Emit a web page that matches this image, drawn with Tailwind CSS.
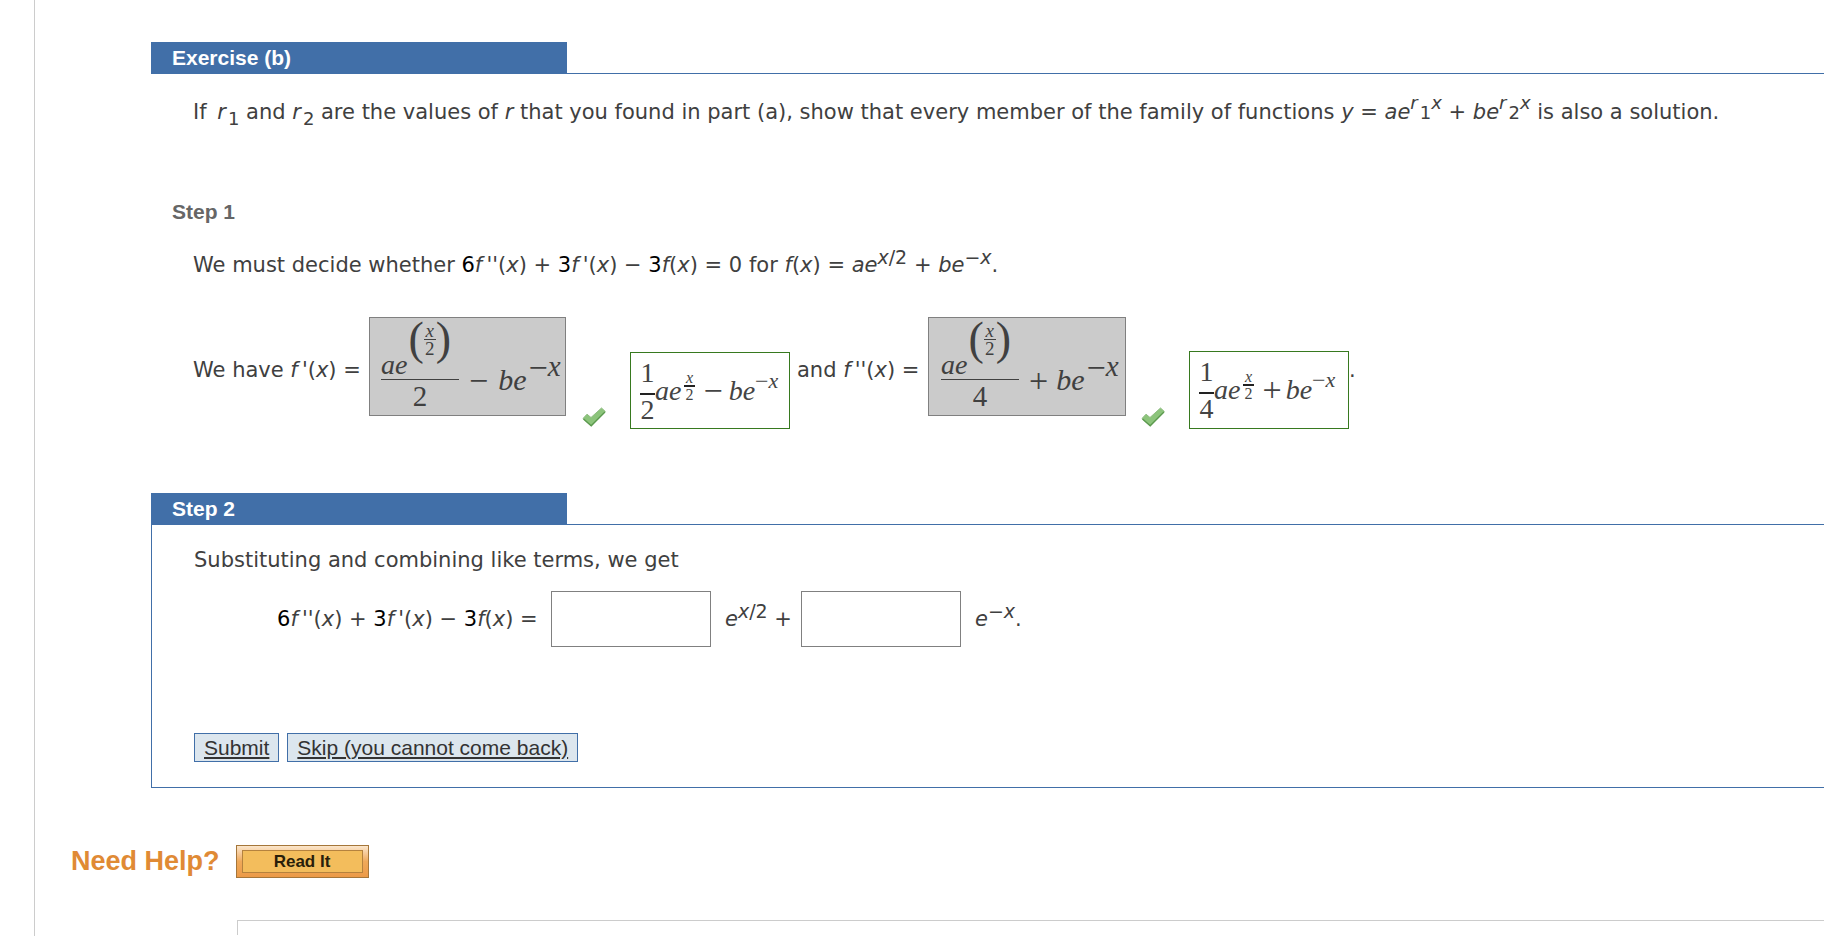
<!DOCTYPE html>
<html lang="en">
  <head>
    <meta charset="utf-8" />
    <title>Exercise (b)</title>
    <script src="https://cdn.jsdelivr.net/npm/@tailwindcss/browser@4"></script>
  </head>
  <body class="bg-white font-['DejaVu_Sans',sans-serif] text-[21px] leading-[30px] text-[#404040]">
    <!-- check mark shared by the graded answers -->
    <svg class="hidden">
      <symbol id="check" viewBox="0 0 24 20">
        <path
          d="M1 11.5 L5 7.2 L9 10.5 L19.5 1 L23.3 4.5 L9.2 19 Z"
          fill="#8cc47b"
          stroke="#8fbd82"
          stroke-width="1"
          stroke-linejoin="round"
        />
        <path d="M1.5 12 L9.2 18.8 L23 5" fill="none" stroke="#5c9a4f" stroke-width="1.4" />
      </symbol>
    </svg>

    <main class="ml-[34px] min-h-screen border-l border-[#cccccc] pt-[42px]">
      <div class="ml-[116px]">
        <!-- Exercise -->
        <section>
          <h2 class="w-[416px] bg-[#416fa8] pl-[21px] font-['Liberation_Sans',sans-serif] text-[21px] leading-[31px] font-bold text-white">Exercise (b)</h2>
          <div class="border-t border-[#416fa8] pt-[23px] pl-[42px]">
            <p class="whitespace-nowrap">
              <span class="mr-1">If</span> <i>r</i><sub class="-bottom-1.5 ml-0.5 text-[18px]">1</sub> and <i>r</i><sub class="-bottom-1.5 ml-0.5 text-[18px]">2</sub> are the values of <i>r</i> that you found in part (a), show that every member of the family of functions <i>y</i> = <i>ae</i><sup class="-top-2.5 text-[18px]"><i>r</i><sub class="-bottom-2.5 ml-0.5 text-[18px]">1</sub><i>x</i></sup> + <i>be</i><sup class="-top-2.5 text-[18px]"><i>r</i><sub class="-bottom-2.5 ml-0.5 text-[18px]">2</sub><i>x</i></sup> is also a solution.
            </p>
          </div>
        </section>

        <!-- Step 1 -->
        <section class="mt-[69px]">
          <h2 class="pl-[21px] font-['Liberation_Sans',sans-serif] text-[21px] leading-[31px] font-bold text-[#666666]">Step 1</h2>
          <div class="pt-[23px] pl-[42px] whitespace-nowrap">
            <p>
              We must decide whether <span class="text-black">6</span><i>f&thinsp;''</i>(<i>x</i>) + <span class="text-black">3</span><i>f&thinsp;'</i>(<i>x</i>) − <span class="text-black">3</span><i>f</i>(<i>x</i>) = 0 for <i>f</i>(<i>x</i>) = <i>ae</i><sup class="-top-2 text-[19px]"><i>x</i>/2</sup> + <i>be</i><sup class="-top-2 text-[19px]">−<i>x</i></sup>.
            </p>
            <div class="mt-[37px] flex h-28 items-start">
              <p class="mt-[38px] w-[176px]">We have <i>f&thinsp;'</i>(<i>x</i>) =</p>
              <!-- submitted answer -->
              <div class="flex h-[99px] w-[197px] shrink-0 items-start border border-[#808080] bg-[#cbcbcb] pl-[11px] font-['Liberation_Serif',serif] text-[29px] leading-[29px]">
                <div class="w-[78px]">
                  <div class="flex h-[62px] items-end border-b border-[#404040]">
                    <i class="text-[28px]">ae</i>
                    <div class="mb-[17px] ml-px flex items-center text-[46px] leading-[46px]">
                      <span>(</span>
                      <span class="flex w-3 flex-col items-center text-[19px] leading-[17px]">
                        <i class="border-b border-[#404040] px-0.5">x</i>
                        <span>2</span>
                      </span>
                      <span>)</span>
                    </div>
                  </div>
                  <div class="pt-0.5 text-center">2</div>
                </div>
                <span class="mt-12 ml-2.5 text-[34px]">−</span>
                <i class="mt-[47px] ml-2.5 text-[30px]">be</i>
                <span class="mt-[35px] ml-0.5 text-[34px]">−</span>
                <i class="mt-[34px]">x</i>
              </div>
              <svg class="mb-0.5 ml-4 h-5 w-6 self-end" role="img" aria-label="Correct"><use href="#check" /></svg>
              <!-- answer key -->
              <div class="ml-6 flex h-[77px] w-40 shrink-0 items-start self-end border border-[#37791f] pl-[9px] font-['Liberation_Serif',serif] text-[28px] leading-[28px] text-[#444444]">
                <div class="mt-1.5 w-[15px] text-center">
                  <div class="h-9 border-b-2 border-[#222222]">1</div>
                  <div class="pt-px">2</div>
                </div>
                <i class="mt-6">ae</i>
                <span class="mt-[17px] ml-0.5 flex w-3 flex-col items-center text-[16px] leading-[15px]">
                  <i class="border-b-2 border-[#222222] px-0.5">x</i>
                  <span>2</span>
                </span>
                <span class="mt-6 ml-2 text-[34px]">−</span>
                <i class="mt-6 ml-1.5">be</i>
                <span class="mt-3.5 text-[24px]">−</span>
                <i class="mt-3.5 text-[22px]">x</i>
              </div>
              <p class="mt-[38px] ml-[7px] w-[131px]">and <i>f&thinsp;''</i>(<i>x</i>) =</p>
              <div class="flex h-[99px] w-[198px] shrink-0 items-start border border-[#808080] bg-[#cbcbcb] pl-[12px] font-['Liberation_Serif',serif] text-[29px] leading-[29px]">
                <div class="w-[78px]">
                  <div class="flex h-[62px] items-end border-b border-[#404040]">
                    <i class="text-[28px]">ae</i>
                    <div class="mb-[17px] ml-px flex items-center text-[46px] leading-[46px]">
                      <span>(</span>
                      <span class="flex w-3 flex-col items-center text-[19px] leading-[17px]">
                        <i class="border-b border-[#404040] px-0.5">x</i>
                        <span>2</span>
                      </span>
                      <span>)</span>
                    </div>
                  </div>
                  <div class="pt-0.5 text-center">4</div>
                </div>
                <span class="mt-12 ml-2.5 text-[34px]">+</span>
                <i class="mt-[47px] ml-2 text-[30px]">be</i>
                <span class="mt-[35px] ml-0.5 text-[34px]">−</span>
                <i class="mt-[34px]">x</i>
              </div>
              <svg class="mb-0.5 ml-[15px] h-5 w-6 self-end" role="img" aria-label="Correct"><use href="#check" /></svg>
              <div class="ml-6 flex h-[78px] w-40 shrink-0 items-start self-end border border-[#37791f] pl-[9px] font-['Liberation_Serif',serif] text-[28px] leading-[28px] text-[#444444]">
                <div class="mt-1.5 w-[15px] text-center">
                  <div class="h-9 border-b-2 border-[#222222]">1</div>
                  <div class="pt-px">4</div>
                </div>
                <i class="mt-6">ae</i>
                <span class="mt-[17px] ml-0.5 flex w-3 flex-col items-center text-[16px] leading-[15px]">
                  <i class="border-b-2 border-[#222222] px-0.5">x</i>
                  <span>2</span>
                </span>
                <span class="mt-6 ml-2 text-[34px]">+</span>
                <i class="mt-6 ml-1">be</i>
                <span class="mt-3.5 text-[24px]">−</span>
                <i class="mt-3.5 text-[22px]">x</i>
              </div>
              <p class="mt-[38px]">.</p>
            </div>
          </div>
        </section>

        <!-- Step 2 -->
        <section class="mt-16">
          <h2 class="w-[416px] bg-[#416fa8] pl-[21px] font-['Liberation_Sans',sans-serif] text-[21px] leading-[31px] font-bold text-white">Step 2</h2>
          <form class="border-y border-l border-[#416fa8] pt-5 pb-[25px] pl-[42px]">
            <p>Substituting and combining like terms, we get</p>
            <div class="mt-4 ml-[83px] flex items-center whitespace-nowrap">
              <label for="first-coefficient" class="w-[274px]"><span class="text-black">6</span><i>f&thinsp;''</i>(<i>x</i>) + <span class="text-black">3</span><i>f&thinsp;'</i>(<i>x</i>) − <span class="text-black">3</span><i>f</i>(<i>x</i>) =</label>
              <input id="first-coefficient" type="text" class="h-14 w-40 border border-[#808080] bg-white px-2" />
              <label for="second-coefficient" class="w-[90px] pl-[14px]"><i>e</i><sup class="-top-2 text-[19px]"><i>x</i>/2</sup> +</label>
              <input id="second-coefficient" type="text" class="h-14 w-40 border border-[#808080] bg-white px-2" />
              <span class="pl-[14px]"><i>e</i><sup class="-top-2 text-[19px]">−<i>x</i></sup>.</span>
            </div>
            <div class="mt-[86px] flex gap-2 font-['Liberation_Sans',sans-serif] text-[21px] leading-[27px] text-[#333333]">
              <button type="button" class="border border-[#416fa8] bg-[#dce6ee] px-[9px] underline">Submit</button>
              <button type="button" class="border border-[#416fa8] bg-[#dce6ee] px-[9px] underline">Skip (you cannot come back)</button>
            </div>
          </form>
        </section>
      </div>

      <!-- Help -->
      <div class="mt-[57px] ml-[36px] flex items-center gap-4 font-['Liberation_Sans',sans-serif] font-bold">
        <span class="text-[27px] leading-[33px] text-[#e08a35]">Need Help?</span>
        <button type="button" class="h-[33px] w-[133px] border border-[#a5763a] bg-linear-to-b from-[#fbe6cb] via-[#efa959] to-[#ec9a48] px-[5px] py-1">
          <span class="block border border-[#b5823e] bg-[#f3bd5c] text-[17px] leading-[21px] text-[#2a1f0a]">Read It</span>
        </button>
      </div>

      <div class="mt-[42px] ml-[202px] h-[15px] border-t border-l border-[#cccccc]"></div>
    </main>
  </body>
</html>
